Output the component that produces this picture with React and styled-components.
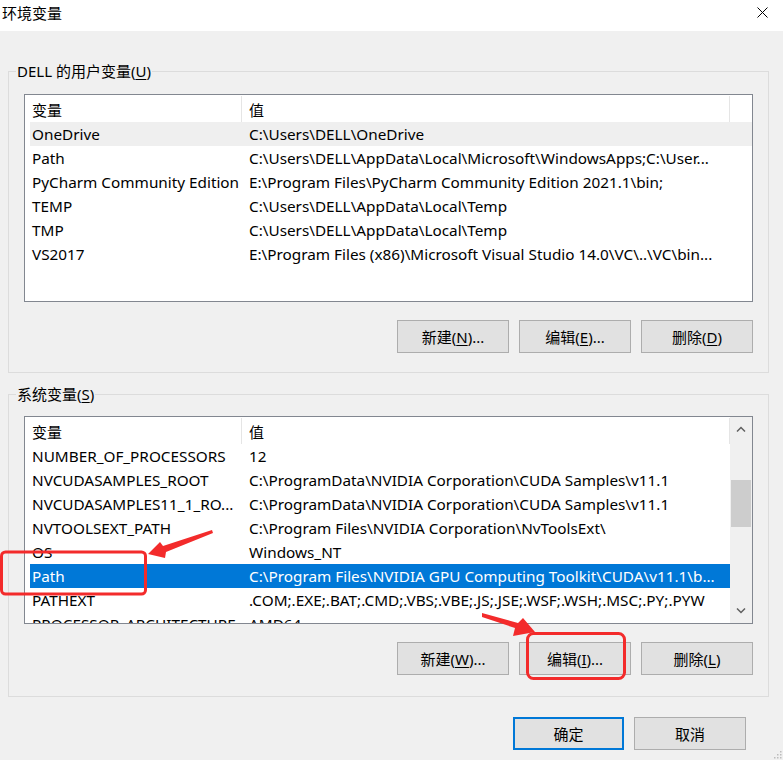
import React from "react";
import styled, { createGlobalStyle } from "styled-components";

const GlobalStyle = createGlobalStyle`
  html, body {
    margin: 0;
    padding: 0;
    background: #f0f0f0;
  }
`;

const FONT = `"Noto Sans", "Noto Sans CJK SC", sans-serif`;

const Window = styled.div`
  position: relative;
  width: 783px;
  height: 760px;
  overflow: hidden;
  background: #f0f0f0;
  display: flex;
  flex-direction: column;
  font-family: ${FONT};
  font-size: 15px;
  color: #000;
`;

const TitleBar = styled.div`
  height: 31px;
  flex: none;
  background: #fff;
  display: flex;
  align-items: flex-start;
  justify-content: space-between;
  padding: 2px 15px 0 2px;
  box-sizing: border-box;
`;

const Title = styled.span`
  font-size: 15px;
  line-height: 22px;
`;

const CloseIcon = styled.svg`
  margin-top: 5px;
`;

const Body = styled.div`
  display: flex;
  flex-direction: column;
  padding: 0 14px 0 8px;
`;

const Group = styled.fieldset`
  margin: ${(p) => p.$top}px 0 0 0;
  padding: ${(p) => p.$padTop}px 15px ${(p) => p.$padBottom}px 15px;
  border: 1px solid #dcdcdc;
  min-width: 0;
`;

const Legend = styled.legend`
  margin-left: -8px;
  padding: 0 1px;
  line-height: 20px;
  font-size: 15px;
`;

const U = styled.span`
  text-decoration: underline;
  text-underline-offset: 2px;
`;

const ListBox = styled.div`
  height: 208px;
  box-sizing: border-box;
  border: 1px solid #828790;
  background: #fff;
  display: flex;
  overflow: hidden;
`;

const ListInner = styled.div`
  flex: 1;
  padding-left: 5px;
  overflow: hidden;
`;

const Header = styled.div`
  display: grid;
  grid-template-columns: 212px 488px;
  height: 27px;
`;

const HeadCell = styled.div`
  padding: 4px 0 0 ${(p) => (p.$first ? 2 : 7)}px;
  border-right: 1px solid #e5e5e5;
  margin-top: 1px;
  line-height: 20px;
`;

const Row = styled.div`
  display: grid;
  grid-template-columns: 212px 488px;
  height: 24px;
  align-items: center;
  background: ${(p) =>
    p.$sel === "blue" ? "#0078d7" : p.$sel === "grey" ? "#efefef" : "transparent"};
  color: ${(p) => (p.$sel === "blue" ? "#fff" : "#000")};
`;

const Cell = styled.div`
  padding-left: ${(p) => (p.$first ? 2 : 7)}px;
  white-space: nowrap;
  overflow: hidden;
  line-height: 20px;
  font-size: 15.3px;
`;

const ScrollBar = styled.div`
  width: 22px;
  flex: none;
  background: #f0f0f0;
  display: flex;
  flex-direction: column;
`;

const ScrollBtn = styled.div`
  height: 24px;
  flex: none;
  display: flex;
  align-items: center;
  justify-content: center;
`;

const Track = styled.div`
  flex: 1;
  padding-top: 39px;
`;

const Thumb = styled.div`
  height: 47px;
  margin: 0 1px;
  background: #cdcdcd;
`;

const ButtonRow = styled.div`
  display: flex;
  justify-content: flex-end;
  gap: 10px;
  margin-top: 18px;
`;

const Button = styled.div`
  width: ${(p) => p.$w || 112}px;
  height: 33px;
  box-sizing: border-box;
  border: ${(p) => (p.$default ? "2px solid #0078d7" : "1px solid #adadad")};
  background: #e1e1e1;
  display: flex;
  align-items: center;
  justify-content: center;
  font-size: 15px;
  line-height: 20px;
`;

const Footer = styled(ButtonRow)`
  margin-top: 20px;
  margin-right: 23px;
`;

const Overlay = styled.svg`
  position: absolute;
  left: 0;
  top: 0;
  pointer-events: none;
`;

const Grip = styled.svg`
  position: absolute;
  right: 1px;
  bottom: 1px;
`;

const userVars = [
  ["OneDrive", "C:\\Users\\DELL\\OneDrive", "grey"],
  ["Path", "C:\\Users\\DELL\\AppData\\Local\\Microsoft\\WindowsApps;C:\\User..."],
  ["PyCharm Community Edition", "E:\\Program Files\\PyCharm Community Edition 2021.1\\bin;"],
  ["TEMP", "C:\\Users\\DELL\\AppData\\Local\\Temp"],
  ["TMP", "C:\\Users\\DELL\\AppData\\Local\\Temp"],
  ["VS2017", "E:\\Program Files (x86)\\Microsoft Visual Studio 14.0\\VC\\..\\VC\\bin..."],
];

const sysVars = [
  ["NUMBER_OF_PROCESSORS", "12"],
  ["NVCUDASAMPLES_ROOT", "C:\\ProgramData\\NVIDIA Corporation\\CUDA Samples\\v11.1"],
  ["NVCUDASAMPLES11_1_RO...", "C:\\ProgramData\\NVIDIA Corporation\\CUDA Samples\\v11.1"],
  ["NVTOOLSEXT_PATH", "C:\\Program Files\\NVIDIA Corporation\\NvToolsExt\\"],
  ["OS", "Windows_NT"],
  ["Path", "C:\\Program Files\\NVIDIA GPU Computing Toolkit\\CUDA\\v11.1\\b...", "blue"],
  ["PATHEXT", ".COM;.EXE;.BAT;.CMD;.VBS;.VBE;.JS;.JSE;.WSF;.WSH;.MSC;.PY;.PYW"],
  ["PROCESSOR_ARCHITECTURE", "AMD64"],
];

const VarList = ({ rows, scroll }) => (
  <ListBox>
    <ListInner>
      <Header>
        <HeadCell $first>变量</HeadCell>
        <HeadCell>值</HeadCell>
      </Header>
      {rows.map(([name, value, sel]) => (
        <Row key={name + value} $sel={sel}>
          <Cell $first>{name}</Cell>
          <Cell>{value}</Cell>
        </Row>
      ))}
    </ListInner>
    {scroll && (
      <ScrollBar>
        <ScrollBtn>
          <svg width="10" height="6" viewBox="0 0 10 6">
            <path d="M1 5.5 L5 1.5 L9 5.5" fill="none" stroke="#606060" strokeWidth="1.5" />
          </svg>
        </ScrollBtn>
        <Track>
          <Thumb />
        </Track>
        <ScrollBtn>
          <svg width="10" height="6" viewBox="0 0 10 6">
            <path d="M1 0.5 L5 4.5 L9 0.5" fill="none" stroke="#606060" strokeWidth="1.5" />
          </svg>
        </ScrollBtn>
      </ScrollBar>
    )}
  </ListBox>
);

const RED = "#f32b2b";

export default function App() {
  return (
    <Window>
      <GlobalStyle />
      <TitleBar>
        <Title>环境变量</Title>
        <CloseIcon width="11" height="11" viewBox="0 0 11 11">
          <path d="M0.5 0.5 L10.5 10.5 M10.5 0.5 L0.5 10.5" stroke="#000" strokeWidth="1" />
        </CloseIcon>
      </TitleBar>

      <Body>
        <Group $top={30} $padTop={13} $padBottom={19}>
          <Legend>
            DELL 的用户变量(<U>U</U>)
          </Legend>
          <VarList rows={userVars} />
          <ButtonRow>
            <Button>
              新建(<U>N</U>)...
            </Button>
            <Button>
              编辑(<U>E</U>)...
            </Button>
            <Button>
              删除(<U>D</U>)
            </Button>
          </ButtonRow>
        </Group>

        <Group $top={11} $padTop={12} $padBottom={21}>
          <Legend>
            系统变量(<U>S</U>)
          </Legend>
          <VarList rows={sysVars} scroll />
          <ButtonRow>
            <Button>
              新建(<U>W</U>)...
            </Button>
            <Button>
              编辑(<U>I</U>)...
            </Button>
            <Button>
              删除(<U>L</U>)
            </Button>
          </ButtonRow>
        </Group>

        <Footer>
          <Button $default $w={111}>
            确定
          </Button>
          <Button>取消</Button>
        </Footer>
      </Body>

      <Grip width="10" height="10" viewBox="0 0 10 10">
        {[
          [8, 2],
          [8, 5],
          [5, 5],
          [8, 8],
          [5, 8],
          [2, 8],
        ].map(([x, y]) => (
          <rect key={`${x}-${y}`} x={x} y={y} width="1.5" height="1.5" fill="#bcbcbc" />
        ))}
      </Grip>

      <Overlay width="783" height="760" viewBox="0 0 783 760">
        <rect x="1.5" y="552" width="144" height="42" rx="4" fill="none" stroke={RED} strokeWidth="3" />
        <polygon
          points="148,554 160,542 163,546 212,530 213,533 166,552 165,558"
          fill={RED}
        />
        <rect x="527.5" y="633.5" width="97" height="45" rx="6" fill="none" stroke={RED} strokeWidth="3" />
        <polygon
          points="482,613 518,623 523,618 535,632 513,636 515,628 482,617"
          fill={RED}
        />
      </Overlay>
    </Window>
  );
}
